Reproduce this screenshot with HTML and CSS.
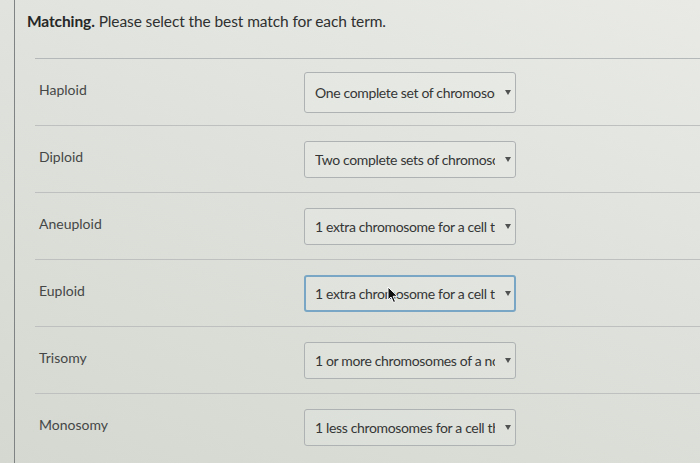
FILE: index.html
```html
<!DOCTYPE html>
<html lang="en">
<head>
    <meta charset="UTF-8">
    <meta name="viewport" content="width=device-width, initial-scale=1.0">
    <title>Matching</title>
    <link rel="stylesheet" href="styles.css">
</head>
<body>
    <div class="question">
        <h1 class="prompt"><b>Matching.</b> Please select the best match for each term.</h1>
        <ul class="pairs">
            <li class="pair">
                <span class="term">Haploid</span>
                <div class="select"><span class="choice">One complete set of chromosomes</span><span class="caret"></span></div>
            </li>
            <li class="pair">
                <span class="term">Diploid</span>
                <div class="select"><span class="choice">Two complete sets of chromosomes</span><span class="caret"></span></div>
            </li>
            <li class="pair">
                <span class="term">Aneuploid</span>
                <div class="select"><span class="choice">1 extra chromosome for a cell that</span><span class="caret"></span></div>
            </li>
            <li class="pair">
                <span class="term">Euploid</span>
                <div class="select focused">
                    <span class="choice">1 extra chromosome for a cell that</span><span class="caret"></span>
                    <!-- mouse pointer hovering the field -->
                    <svg class="pointer" width="12" height="18" viewBox="0 0 12 18">
                        <path d="M1 1 L1 14 L4 11 L6.5 16.5 L8.5 15.6 L6.2 10.3 L10.5 10.3 Z" fill="#111" stroke="#fff" stroke-width="1"/>
                    </svg>
                </div>
            </li>
            <li class="pair">
                <span class="term">Trisomy</span>
                <div class="select"><span class="choice">1 or more chromosomes of a normal</span><span class="caret"></span></div>
            </li>
            <li class="pair">
                <span class="term">Monosomy</span>
                <div class="select"><span class="choice">1 less chromosomes for a cell that</span><span class="caret"></span></div>
            </li>
        </ul>
    </div>
</body>
</html>
```

FILE: styles.css
```css
body{
    margin: 0;
    height: 463px;
    overflow: hidden;
    font-family: Lato, "Noto Sans", sans-serif;
    background: linear-gradient(200deg, #e9eae6 0%, #dfe2dc 45%, #d4d8d0 100%);
}
.question{
    margin-left: 14px;
    padding-left: 12px;
    height: 463px;
    border-left: 1px solid #7f8383;
}
.prompt{
    margin: 0;
    padding-top: 12px;
    height: 46px;
    font-size: 15.5px;
    font-weight: normal;
    letter-spacing: -0.1px;
    color: #2f3030;
}
.prompt b{
    color: #262727;
}
.pairs{
    list-style: none;
    margin: 0 0 0 8px;
    padding: 0;
    border-top: 1px solid #b4b8b8;
}
.pair{
    display: grid;
    grid-template-columns: 265px 212px;
    align-items: center;
    height: 66px;
    padding-left: 4px;
    border-bottom: 1px solid #bdc0bf;
}
.pair:last-child{
    border-bottom: none;
}
.term{
    font-size: 14px;
    color: #454747;
    margin-top: -5px;
}
.select{
    position: relative;
    display: flex;
    align-items: center;
    height: 37px;
    box-sizing: border-box;
    padding: 0 4px 0 10px;
    border: 1px solid #aeb2b3;
    border-radius: 3px;
    background: rgba(255, 255, 255, 0.12);
}
.pair:first-child .select{
    height: 41px;
}
.select.focused{
    border: 2px solid #79a6c4;
    padding: 0 3px 0 9px;
}
.choice{
    flex: 1;
    overflow: hidden;
    white-space: nowrap;
    font-size: 14px;
    letter-spacing: -0.35px;
    color: #353636;
}
.caret{
    margin-left: 10px;
    border-top: 5px solid #505252;
    border-left: 3px solid transparent;
    border-right: 3px solid transparent;
}
.pointer{
    position: absolute;
    left: 81px;
    top: 9px;
}
```
